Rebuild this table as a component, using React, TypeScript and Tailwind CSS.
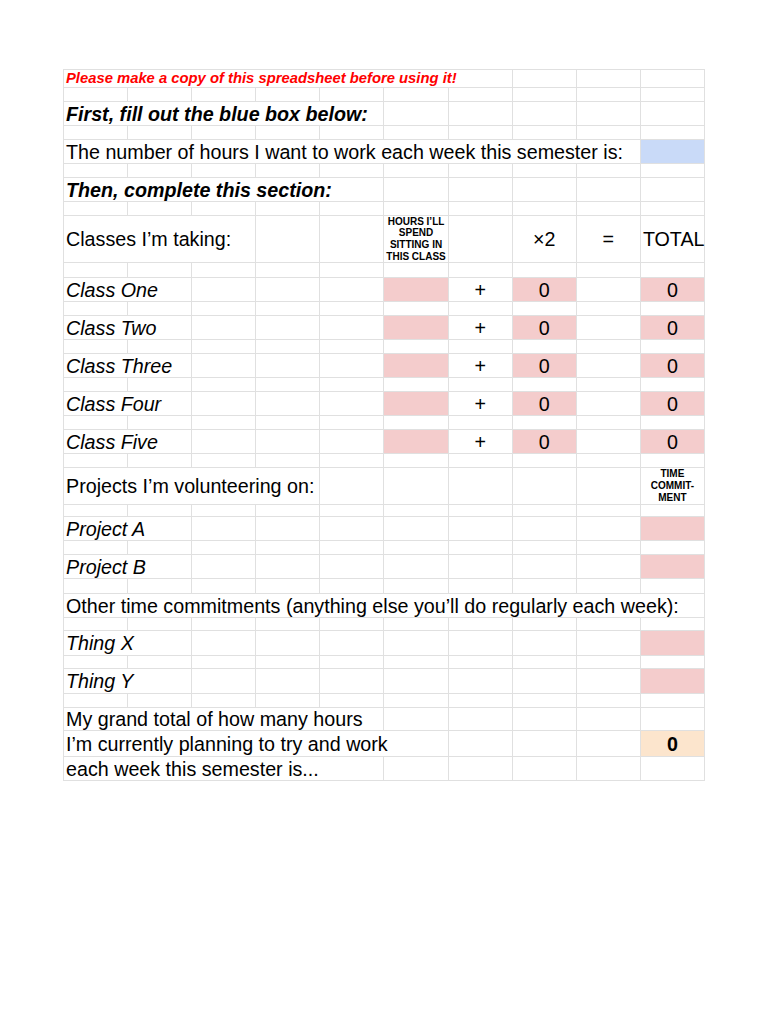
import React from "react";

const SPAN: Record<number, string> = {
  1: "col-span-1",
  2: "col-span-2",
  3: "col-span-3",
  4: "col-span-4",
  5: "col-span-5",
  6: "col-span-6",
  7: "col-span-7",
  8: "col-span-8",
  9: "col-span-9",
  10: "col-span-10",
};

type CellProps = {
  s?: number;
  bg?: string;
  cls?: string;
  children?: React.ReactNode;
};

function Cell({ s = 1, bg = "bg-white", cls = "", children }: CellProps) {
  return <div className={`${SPAN[s]} ${bg} flex min-w-0 ${cls}`}>{children}</div>;
}

const TXT = "items-center pl-[2px] whitespace-nowrap text-[19.7px] leading-[22px] text-black";
const IT = `${TXT} italic`;
const CENTER = "items-center justify-center text-[19.7px] leading-[22px] text-black";
const PINK = "bg-[#f4cccc]";

function empties(n: number, prefix: string) {
  return Array.from({ length: n }, (_, i) => <Cell key={`${prefix}-${i}`} />);
}

function spacer(prefix: string) {
  return empties(10, prefix);
}

function classRow(name: string, k: string) {
  return [
    <Cell key={`${k}-a`} s={2} cls={IT}>
      {name}
    </Cell>,
    ...empties(3, `${k}-e`),
    <Cell key={`${k}-h`} bg={PINK} />,
    <Cell key={`${k}-p`} cls={CENTER}>
      +
    </Cell>,
    <Cell key={`${k}-x`} bg={PINK} cls={CENTER}>
      0
    </Cell>,
    <Cell key={`${k}-q`} />,
    <Cell key={`${k}-t`} bg={PINK} cls={CENTER}>
      0
    </Cell>,
  ];
}

function itemRow(name: string, k: string) {
  return [
    <Cell key={`${k}-a`} s={2} cls={IT}>
      {name}
    </Cell>,
    ...empties(7, `${k}-e`),
    <Cell key={`${k}-t`} bg={PINK} />,
  ];
}

export default function App() {
  const cells: React.ReactNode[] = [
    <Cell
      key="r1"
      s={7}
      cls="items-center pl-[2px] whitespace-nowrap text-[14.8px] leading-[17px] font-bold italic text-[#ff0000]"
    >
      Please make a copy of this spreadsheet before using it!
    </Cell>,
    ...empties(3, "r1e"),
    ...spacer("s1"),
    <Cell key="r3" s={5} cls={`${TXT} font-bold italic`}>
      First, fill out the blue box below:
    </Cell>,
    ...empties(5, "r3e"),
    ...spacer("s2"),
    <Cell key="r5" s={9} cls={TXT}>
      The number of hours I want to work each week this semester is:
    </Cell>,
    <Cell key="r5b" bg="bg-[#c9daf8]" />,
    ...spacer("s3"),
    <Cell key="r7" s={5} cls={`${TXT} font-bold italic`}>
      Then, complete this section:
    </Cell>,
    ...empties(5, "r7e"),
    ...spacer("s4"),
    <Cell key="r9" s={3} cls={TXT}>
      Classes I’m taking:
    </Cell>,
    ...empties(2, "r9e"),
    <Cell
      key="r9h"
      cls="flex-col items-center justify-center text-center text-[10px] leading-[11.7px] font-bold text-black whitespace-nowrap"
    >
      <span>HOURS I’LL</span>
      <span>SPEND</span>
      <span>SITTING IN</span>
      <span>THIS CLASS</span>
    </Cell>,
    <Cell key="r9p" />,
    <Cell key="r9x" cls={CENTER}>
      ×2
    </Cell>,
    <Cell key="r9q" cls={CENTER}>
      =
    </Cell>,
    <Cell key="r9t" cls="items-center pl-[2px] whitespace-nowrap text-[19.7px] leading-[22px] text-black">
      TOTAL
    </Cell>,
    ...spacer("s5"),
    ...classRow("Class One", "c1"),
    ...spacer("s6"),
    ...classRow("Class Two", "c2"),
    ...spacer("s7"),
    ...classRow("Class Three", "c3"),
    ...spacer("s8"),
    ...classRow("Class Four", "c4"),
    ...spacer("s9"),
    ...classRow("Class Five", "c5"),
    ...spacer("s10"),
    <Cell key="pj" s={4} cls={TXT}>
      Projects I’m volunteering on:
    </Cell>,
    ...empties(5, "pje"),
    <Cell
      key="pjh"
      cls="flex-col items-center justify-center text-center text-[10px] leading-[11.7px] font-bold text-black whitespace-nowrap"
    >
      <span>TIME</span>
      <span>COMMIT-</span>
      <span>MENT</span>
    </Cell>,
    ...spacer("s11"),
    ...itemRow("Project A", "pa"),
    ...spacer("s12"),
    ...itemRow("Project B", "pb"),
    ...spacer("s13"),
    <Cell key="ot" s={10} cls={TXT}>
      Other time commitments (anything else you’ll do regularly each week):
    </Cell>,
    ...spacer("s14"),
    ...itemRow("Thing X", "tx"),
    ...spacer("s15"),
    ...itemRow("Thing Y", "ty"),
    ...spacer("s16"),
    <Cell key="g1" s={5} cls={TXT}>
      My grand total of how many hours
    </Cell>,
    ...empties(5, "g1e"),
    <Cell key="g2" s={6} cls={TXT}>
      I’m currently planning to try and work
    </Cell>,
    ...empties(3, "g2e"),
    <Cell key="g2t" bg="bg-[#fce5cd]" cls={`${CENTER} font-bold`}>
      0
    </Cell>,
    <Cell key="g3" s={5} cls={TXT}>
      each week this semester is...
    </Cell>,
    ...empties(5, "g3e"),
  ];

  return (
    <div className="min-h-[1024px] w-[768px] bg-white font-['Liberation_Sans',Arial,sans-serif]">
      <div className="pt-[69px] pl-[63px]">
        <div className="grid w-[642px] grid-cols-[repeat(10,minmax(0,1fr))] grid-rows-[17px_13px_23px_13px_23px_13px_23px_13px_46px_14px_23px_13px_23px_13px_23px_13px_23px_13px_23px_13px_36px_11px_23px_13px_23px_14px_23px_12px_24px_12px_24px_13px_22px_25px_23px] gap-px bg-[#e0e0e0] p-px">
          {cells}
        </div>
      </div>
    </div>
  );
}
